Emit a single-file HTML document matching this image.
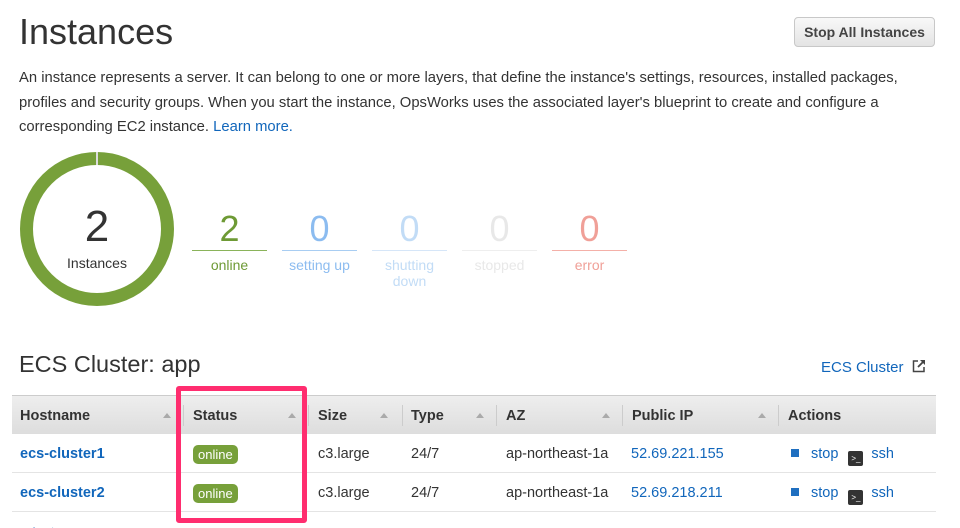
<!DOCTYPE html>
<html><head><style>
*{margin:0;padding:0;box-sizing:border-box}
html,body{width:960px;height:528px;overflow:hidden}
body{background:#fff;font-family:"Liberation Sans",sans-serif;color:#333;position:relative}
.a{position:absolute}
a{color:#1166bb;text-decoration:none}
h1{position:absolute;left:19px;top:11px;font-size:36px;font-weight:400;color:#333}
.btn{position:absolute;left:794px;top:17px;width:141px;height:30px;border:1px solid #c8c8c8;border-radius:4px;background:linear-gradient(#f8f8f8,#e4e4e4);font-size:14px;font-weight:bold;color:#444;text-align:center;line-height:28px}
.desc{position:absolute;left:19px;top:66px;width:930px;font-size:14.8px;line-height:24.5px;color:#333}
.ring{position:absolute;left:20px;top:152px;width:154px;height:154px;border-radius:50%;border:13px solid #77a03a}
.tick{position:absolute;left:96px;top:152px;width:2px;height:13px;background:#ddd}
.big{position:absolute;left:20px;top:202px;width:154px;text-align:center;font-size:44px;color:#333}
.lbl{position:absolute;left:20px;top:255px;width:154px;text-align:center;font-size:14px;color:#333}
.st{position:absolute;top:208px;width:75px;text-align:center}
.st .n{font-size:36px;height:42px;line-height:42px}
.st .l{border-top:1.5px solid;padding-top:6px;font-size:14px;line-height:16px}
h2{position:absolute;left:19px;top:351px;font-size:23.5px;font-weight:400;color:#333}
.tbl{position:absolute;left:12px;top:395px;width:924px}
.hd{height:39px;background:linear-gradient(#eee,#ddd);border-top:1px solid #ccc;position:relative}
.row{height:39px;border-bottom:1px solid #e4e4e4;position:relative;font-size:14.5px}
.c{position:absolute;top:1px;line-height:39px;white-space:nowrap}
.hd .c{font-weight:bold;font-size:14.5px;color:#333;line-height:39px}
.sep{position:absolute;top:9px;width:1px;height:21px;background:#ccc}
.ar{position:absolute;top:17px;width:0;height:0;border-left:4px solid transparent;border-right:4px solid transparent;border-bottom:5px solid #aaa}
.badge{display:inline-block;background:#77a03a;color:#fff;border-radius:5px;font-size:13px;line-height:19px;padding:0 5px;vertical-align:middle}
.b{font-weight:bold}
.sq{display:inline-block;width:8px;height:8px;background:#1f6fc0;margin-right:12px;vertical-align:1px}
.term{display:inline-block;width:15px;height:15px;background:#333;border-radius:2px;color:#fff;font-size:8px;line-height:15px;margin:0 8px 0 10px;vertical-align:-3px;text-align:center}
.pink{position:absolute;left:176px;top:386px;width:131px;height:137px;border:5px solid #ff2d6f;border-radius:3px}
</style></head><body>
<h1>Instances</h1>
<div class="btn">Stop All Instances</div>
<div class="desc">An instance represents a server. It can belong to one or more layers, that define the instance's settings, resources, installed packages, profiles and security groups. When you start the instance, OpsWorks uses the associated layer's blueprint to create and configure a corresponding EC2 instance. <a>Learn more.</a></div>
<div class="ring"></div><div class="tick"></div>
<div class="big">2</div><div class="lbl">Instances</div>
<div class="st" style="left:192px;color:#6e9a35"><div class="n">2</div><div class="l" style="border-color:#8ab35a">online</div></div>
<div class="st" style="left:282px;color:#8cbcf0"><div class="n">0</div><div class="l" style="border-color:#a8cdf2">setting up</div></div>
<div class="st" style="left:372px;color:#c2dcf6"><div class="n">0</div><div class="l" style="border-color:#d6e6f8">shutting down</div></div>
<div class="st" style="left:462px;color:#e8e8e8"><div class="n">0</div><div class="l" style="border-color:#eee">stopped</div></div>
<div class="st" style="left:552px;color:#f0a098"><div class="n">0</div><div class="l" style="border-color:#f4b0a8">error</div></div>
<h2>ECS Cluster: app</h2>
<a class="a" style="left:821px;top:359px;font-size:15px">ECS Cluster</a>
<svg class="a" style="left:912px;top:359px" width="14" height="14" viewBox="0 0 14 14"><path d="M6 2H1.5v10.5H12V8" fill="none" stroke="#444" stroke-width="1.5"/><path d="M8 1h5v5z" fill="#444"/><path d="M12 2L6 8" stroke="#444" stroke-width="1.8"/></svg>
<div class="tbl">
<div class="hd">
<div class="c" style="left:8px">Hostname</div><div class="ar" style="left:151px"></div><div class="sep" style="left:171px"></div>
<div class="c" style="left:181px">Status</div><div class="ar" style="left:276px"></div><div class="sep" style="left:296px"></div>
<div class="c" style="left:306px">Size</div><div class="ar" style="left:368px"></div><div class="sep" style="left:390px"></div>
<div class="c" style="left:399px">Type</div><div class="ar" style="left:464px"></div><div class="sep" style="left:484px"></div>
<div class="c" style="left:494px">AZ</div><div class="ar" style="left:590px"></div><div class="sep" style="left:610px"></div>
<div class="c" style="left:620px">Public IP</div><div class="ar" style="left:746px"></div><div class="sep" style="left:766px"></div>
<div class="c" style="left:776px">Actions</div>
</div>
<div class="row">
<div class="c b" style="left:8px"><a>ecs-cluster1</a></div>
<div class="c" style="left:181px"><span class="badge">online</span></div>
<div class="c" style="left:306px">c3.large</div><div class="c" style="left:399px">24/7</div>
<div class="c" style="left:494px">ap-northeast-1a</div>
<div class="c" style="left:619px"><a>52.69.221.155</a></div>
<div class="c" style="left:779px"><span class="sq"></span><a>stop</a><span class="term">&gt;_</span><a>ssh</a></div>
</div>
<div class="row">
<div class="c b" style="left:8px"><a>ecs-cluster2</a></div>
<div class="c" style="left:181px"><span class="badge">online</span></div>
<div class="c" style="left:306px">c3.large</div><div class="c" style="left:399px">24/7</div>
<div class="c" style="left:494px">ap-northeast-1a</div>
<div class="c" style="left:619px"><a>52.69.218.211</a></div>
<div class="c" style="left:779px"><span class="sq"></span><a>stop</a><span class="term">&gt;_</span><a>ssh</a></div>
</div>
</div>
<div class="a" style="left:20px;top:524px;font-size:14px;color:#1166bb">+ Instance</div>
<div class="pink"></div>
</body></html>
